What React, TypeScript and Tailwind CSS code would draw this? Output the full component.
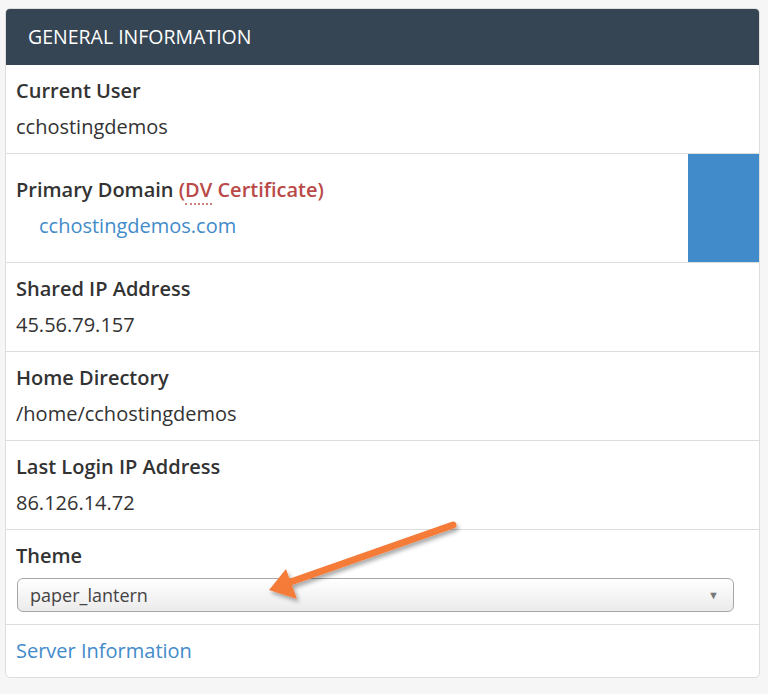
import React from "react";

const font = { fontFamily: '"Open Sans", "Liberation Sans", sans-serif' };

const Row = ({ label, value }: { label: string; value: string }) => (
  <div className="border-b border-[#dddddd] px-[10px] py-3">
    <div className="text-[20px] leading-[28px] font-semibold text-[#333]">{label}</div>
    <div className="mt-2 text-[20px] leading-[28px] text-[#333]">{value}</div>
  </div>
);

export default function App() {
  return (
    <div className="relative min-h-[694px] bg-[#f6f6f6] pt-[8px] pl-[5px] pr-[8px]" style={font}>
      <div className="rounded-[5px] border border-[#dddddd] bg-white overflow-hidden">
        <div className="h-[56px] bg-[#354553] flex items-center px-[22px]">
          <h2 className="text-[19.5px] text-white uppercase">General Information</h2>
        </div>

        <Row label="Current User" value="cchostingdemos" />

        <div className="flex border-b border-[#dddddd]">
          <div className="flex-1 px-[10px] py-[22px]">
            <div className="text-[20px] leading-[28px] font-semibold text-[#333]">
              Primary Domain{" "}
              <span className="text-[#b94a48]">
                (
                <abbr className="no-underline border-b-2 border-dotted border-[#b94a48]/70" title="Domain Validated">
                  DV
                </abbr>{" "}
                Certificate)
              </span>
            </div>
            <a className="mt-2 block pl-[23px] text-[20px] leading-[28px] text-[#428bca]" href="#">
              cchostingdemos.com
            </a>
          </div>
          <div className="w-[71px] bg-[#428bca]" />
        </div>

        <Row label="Shared IP Address" value="45.56.79.157" />
        <Row label="Home Directory" value="/home/cchostingdemos" />
        <Row label="Last Login IP Address" value="86.126.14.72" />

        <div className="border-b border-[#dddddd] pl-[11px] pr-[10px] pt-3 pb-3">
          <div className="text-[20px] leading-[28px] font-semibold text-[#333] -ml-px">Theme</div>
          <div className="mt-2 mr-[15px] h-[34px] rounded-[6px] border border-[#a6a6a6] bg-gradient-to-b from-white to-[#ebebeb] flex items-center justify-between pl-[12px] pr-[14px] shadow-[inset_0_1px_0_#fff]">
            <span className="text-[18px] text-[#444]">paper_lantern</span>
            <span className="text-[11px] text-[#777]">▼</span>
          </div>
        </div>

        <div className="px-[10px] py-3">
          <a className="text-[20px] leading-[28px] text-[#428bca]" href="#">
            Server Information
          </a>
        </div>
      </div>

      <svg className="absolute left-0 top-0 pointer-events-none" width="768" height="694">
        <defs>
          <filter id="sh" x="-20%" y="-20%" width="140%" height="140%">
            <feDropShadow dx="2" dy="3" stdDeviation="2" floodColor="#000" floodOpacity="0.35" />
          </filter>
        </defs>
        <g filter="url(#sh)">
          <line x1="453" y1="525" x2="282" y2="585" stroke="#f47b39" strokeWidth="7" strokeLinecap="round" />
          <polygon points="269,590 286,569 297,599" fill="#f47b39" />
        </g>
      </svg>
    </div>
  );
}
